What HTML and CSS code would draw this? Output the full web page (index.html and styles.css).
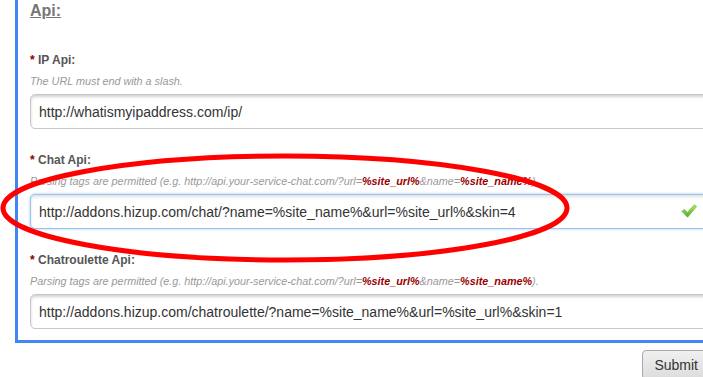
FILE: index.html
```html
<!DOCTYPE html>
<html lang="en">
<head>
    <meta charset="UTF-8">
    <meta name="viewport" content="width=device-width, initial-scale=1.0">
    <title>Api Settings</title>
    <link rel="stylesheet" href="styles.css">
</head>
<body>
    <form class="settings" onsubmit="return false">
        <fieldset class="group">
            <h2 class="group-title">Api:</h2>

            <div class="field">
                <label for="ip_api"><span class="req">*</span> IP Api:</label>
                <p class="hint">The URL must end with a slash.</p>
                <div class="input-wrap">
                    <input type="text" id="ip_api" value="http://whatismyipaddress.com/ip/">
                </div>
            </div>

            <div class="field">
                <label for="chat_api"><span class="req">*</span> Chat Api:</label>
                <p class="hint">Parsing tags are permitted (e.g. http://api.your-service-chat.com/?url=<b>%site_url%</b>&amp;name=<b>%site_name%</b>).</p>
                <div class="input-wrap">
                    <input type="text" id="chat_api" class="active" value="http://addons.hizup.com/chat/?name=%site_name%&amp;url=%site_url%&amp;skin=4">
                    <span class="valid">
                        <svg width="16" height="14" viewBox="0 0 16 14">
                            <defs>
                                <linearGradient id="ok" x1="0" y1="0" x2="0" y2="1">
                                    <stop offset="0" stop-color="#b6ec6a"/>
                                    <stop offset="1" stop-color="#4fae1e"/>
                                </linearGradient>
                            </defs>
                            <path d="M0.8 7.2 L3.6 5.4 L6.2 8.4 L13.4 0.8 L15.6 2.6 L6.6 13.2 Z" fill="url(#ok)" stroke="#5aa82a" stroke-width="0.6" stroke-linejoin="round"/>
                        </svg>
                    </span>
                </div>
            </div>

            <div class="field">
                <label for="roulette_api"><span class="req">*</span> Chatroulette Api:</label>
                <p class="hint">Parsing tags are permitted (e.g. http://api.your-service-chat.com/?url=<b>%site_url%</b>&amp;name=<b>%site_name%</b>).</p>
                <div class="input-wrap">
                    <input type="text" id="roulette_api" value="http://addons.hizup.com/chatroulette/?name=%site_name%&amp;url=%site_url%&amp;skin=1">
                </div>
            </div>
        </fieldset>

        <div class="actions">
            <input type="submit" value="Submit">
        </div>
    </form>

    <!-- red marker drawn over the screenshot -->
    <svg class="marker" width="703" height="377" viewBox="0 0 703 377">
        <ellipse cx="285" cy="208" rx="282" ry="52" fill="none" stroke="#ff0000" stroke-width="5"/>
    </svg>
</body>
</html>
```

FILE: styles.css
```css
html, body {
    margin: 0;
    padding: 0;
    overflow: hidden;
}

body {
    font-family: "Liberation Sans", Arial, sans-serif;
    background: #fff;
    color: #333;
    width: 703px;
    height: 377px;
    position: relative;
}

.settings {
    width: 730px;
}

.group {
    margin: 0 0 0 15px;
    padding: 1px 0 11px 12px;
    border: 3px solid #4285f4;
    border-top: none;
    border-right: none;
}

.group-title {
    margin: 0;
    font-size: 16px;
    line-height: 20px;
    font-weight: bold;
    color: #777;
    text-decoration: underline;
}

.field {
    margin-top: 23px;
}

.field:first-of-type {
    margin-top: 31px;
}

label {
    display: block;
    font-size: 12px;
    line-height: 16px;
    font-weight: bold;
    color: #555;
}

.req {
    color: #8b0000;
}

.hint {
    margin: 6px 0;
    font-size: 10.8px;
    line-height: 14px;
    font-style: italic;
    color: #999;
}

.hint b {
    color: #990000;
    font-weight: bold;
}

.input-wrap {
    position: relative;
}

input[type="text"] {
    box-sizing: border-box;
    display: block;
    width: 100%;
    height: 35px;
    padding: 0 8px;
    font-family: "Liberation Sans", Arial, sans-serif;
    font-size: 14px;
    color: #333;
    background: #fff;
    border: 1px solid #c8c8c8;
    border-radius: 5px;
    box-shadow: inset 0 2px 3px rgba(0, 0, 0, 0.18);
    outline: none;
}

input.active {
    border-color: #9cc4ec;
    box-shadow: inset 0 2px 3px rgba(0, 0, 0, 0.12), 0 0 3px rgba(82, 160, 236, 0.6);
}

.valid {
    position: absolute;
    right: 33px;
    top: 10px;
    line-height: 0;
}

.actions {
    text-align: right;
    padding-top: 7px;
}

input[type="submit"] {
    font-family: "Liberation Sans", Arial, sans-serif;
    font-size: 14px;
    color: #333;
    padding: 6px 31px 6px 11px;
    background: linear-gradient(#f0f0f0, #dcdcdc);
    border: 1px solid #a8a8a8;
    border-radius: 4px;
}

.marker {
    position: absolute;
    left: 0;
    top: 0;
    pointer-events: none;
}
```
